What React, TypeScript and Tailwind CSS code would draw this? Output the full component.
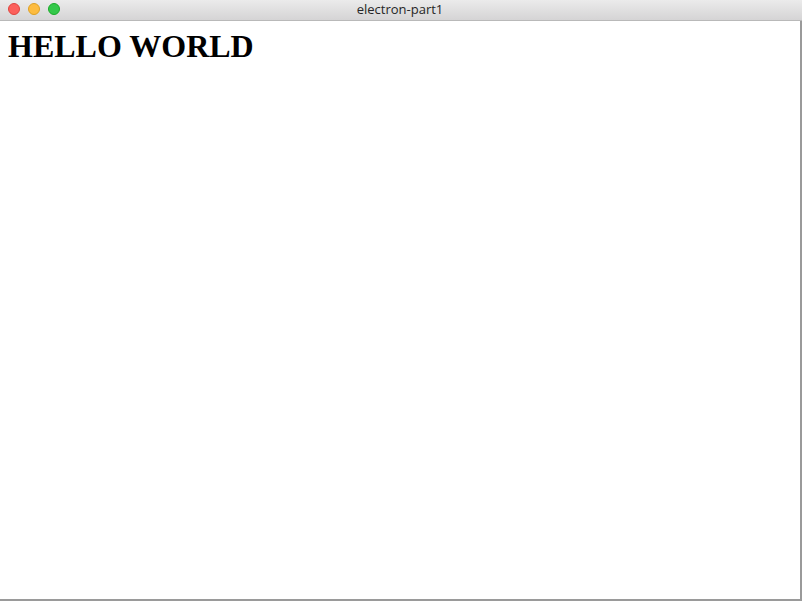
import React from 'react';

const Light: React.FC<{ fill: string; ring: string }> = ({ fill, ring }) => (
    <span className={`block h-3 w-3 rounded-full border ${fill} ${ring}`} />
);

export default function App() {
    return (
        <div className="flex h-[601px] w-[802px] flex-col overflow-hidden bg-white">
            {/* title bar */}
            <div className="relative flex h-[21px] shrink-0 items-center border-b border-[#b9b9b9] bg-gradient-to-b from-[#ebebeb] to-[#d5d4d5] pr-[2px]">
                <div className="absolute left-[8px] top-[3px] flex gap-[8px]">
                    <Light fill="bg-[#fc605c]" ring="border-[#e0443e]" />
                    <Light fill="bg-[#fdbc40]" ring="border-[#dea123]" />
                    <Light fill="bg-[#34c84a]" ring="border-[#1aab29]" />
                </div>
                <div className="flex-1 pb-px text-center font-['Open_Sans','Liberation_Sans',sans-serif] text-[13px] leading-none text-[#262626]">
                    electron-part1
                </div>
            </div>
            {/* page */}
            <div className="flex-1 border-r-2 border-b-2 border-[#9a9a9a] bg-white px-[8px] pt-px">
                <h1 className="font-['Liberation_Serif','Times_New_Roman',serif] text-[32px] font-bold leading-normal text-black">
                    HELLO WORLD
                </h1>
            </div>
        </div>
    );
}
